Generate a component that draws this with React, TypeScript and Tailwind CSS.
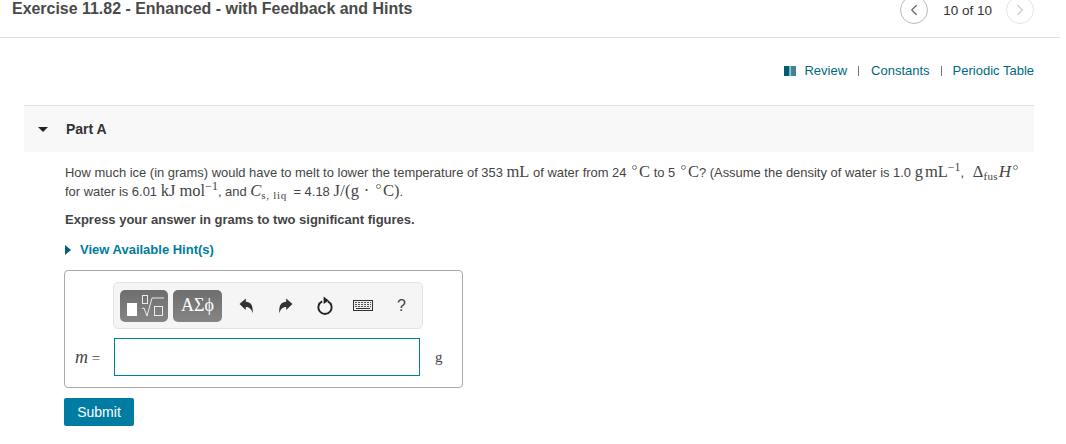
import React from 'react';
import { ChevronLeft, ChevronRight } from 'lucide-react';

// Serif run used for units and symbols inside the question text
const M: React.FC<{ children: React.ReactNode; className?: string }> = ({ children, className }) => (
  <span className={`font-['Liberation_Serif',serif] text-[16.5px] leading-none ${className || ''}`}>{children}</span>
);

const Sup: React.FC<{ children: React.ReactNode }> = ({ children }) => (
  <sup className="font-['Liberation_Serif',serif] text-[12px] leading-none align-[6px] top-0">{children}</sup>
);

const Deg = () => (
  <span className="inline-block w-[5px] h-[5px] mx-[2px] rounded-full border border-[#777] align-[7px]" />
);

const Sub: React.FC<{ children: React.ReactNode; className?: string }> = ({ children, className }) => (
  <sub className={`font-['Liberation_Serif',serif] text-[11px] leading-none align-[-3px] bottom-0 ${className || ''}`}>{children}</sub>
);

const TemplateIcon = () => (
  <svg width="48" height="32" viewBox="0 0 48 32" fill="none">
    <rect x="7" y="13" width="10" height="13" fill="#fff" />
    <path d="M22 18.500l2-0.500 3 8 5-18h12" stroke="#fff" strokeWidth="1" opacity="0.85" />
    <rect x="22.500" y="5.500" width="5" height="8" stroke="#fff" strokeWidth="1" opacity="0.85" />
    <rect x="34.500" y="16.500" width="8" height="9" stroke="#fff" strokeWidth="1" opacity="0.85" />
  </svg>
);

const UndoIcon = ({ flip }: { flip?: boolean }) => (
  <svg width="15" height="16" viewBox="0 0 15 16" className={flip ? '-scale-x-100' : ''}>
    <path d="M0.500 6L6.800 0.500V3.700C11.500 3.800 14.500 7 13.600 15.500C12.800 11.500 10.500 9 6.800 9V12Z" fill="#333" />
  </svg>
);

const ResetIcon = () => (
  <svg width="16" height="19" viewBox="0 0 16 19" fill="none">
    <path d="M5.200 5.400A6.600 6.600 0 1 0 10.800 5.400" stroke="#222" strokeWidth="1.900" />
    <path d="M6.600 0.500L11.800 4.500L6.600 8Z" fill="#222" />
  </svg>
);

const KeyboardIcon = () => (
  <svg width="20" height="11" viewBox="0 0 20 11" fill="none">
    <rect x="0.500" y="0.500" width="19" height="10" fill="#eee" stroke="#333" />
    <path d="M2 2.500h16M2 4.500h16M2 6.500h16" stroke="#555" strokeWidth="1" strokeDasharray="2 1" />
    <path d="M3 8.500h14" stroke="#333" strokeWidth="1" />
  </svg>
);

export default function App() {
  return (
    <div className="w-[1066px] h-[444px] overflow-hidden bg-white font-['Liberation_Sans',Arial,sans-serif] text-[#333]">
      {/* Header */}
      <div className="w-[1060px] h-[38px] border-b border-[#dedede] flex justify-between pl-3 pr-[26px]">
        <h1 className="text-[15.95px] leading-[17px] font-bold text-[#4a4a4a]">
          Exercise 11.82 - Enhanced - with Feedback and Hints
        </h1>
        <div className="flex items-start -mt-1">
          <div className="w-[28px] h-[28px] rounded-full border border-[#bbb] flex items-center justify-center">
            <ChevronLeft size={18} strokeWidth={1.6} className="text-[#666]" />
          </div>
          <span className="ml-[15px] mr-[14px] mt-[7px] text-[13.5px] leading-[15px] text-[#333]">10 of 10</span>
          <div className="w-[28px] h-[28px] rounded-full border border-[#e4e4e4] flex items-center justify-center">
            <ChevronRight size={18} strokeWidth={1.6} className="text-[#ccc]" />
          </div>
        </div>
      </div>

      {/* Resource links */}
      <div className="w-[1034px] h-[67px] pt-[25px] flex justify-end items-start text-[13px] leading-[15px] text-[#006a80]">
        <svg width="12" height="10" viewBox="0 0 12 10" className="mt-[3px] mr-[8px]">
          <rect x="0" y="0" width="5.500" height="10" fill="#005d75" />
          <rect x="6.500" y="0" width="5.500" height="10" fill="#3f8496" />
        </svg>
        <span>Review</span>
        <div className="ml-[11px] mr-[12px] mt-[3px] w-px h-[10px] bg-[#777]" />
        <span>Constants</span>
        <div className="ml-[11px] mr-[11px] mt-[3px] w-px h-[10px] bg-[#777]" />
        <span>Periodic Table</span>
      </div>

      {/* Part header */}
      <div className="ml-6 w-[1010px] h-[47px] border-t border-[#dedede] bg-[#f8f8f8] flex items-center">
        <div className="ml-[14px] w-0 h-0 border-x-[5.5px] border-x-transparent border-t-[5px] border-t-[#222]" />
        <span className="ml-[18px] text-[14px] font-bold text-[#333]">Part A</span>
      </div>

      {/* Question body */}
      <div className="ml-[65px] w-[975px]">
        <div className="mt-[9px] h-[38px] text-[12.95px] leading-[19px] text-[#444] whitespace-nowrap">
          <div className="h-[19px]">
            How much ice (in grams) would have to melt to lower the temperature of 353 <M>mL</M> of water from 24 <Deg />
            <M>C</M> to 5 <Deg /><M>C</M>? (Assume the density of water is 1.0 <M>g</M><M className="ml-[2px]">mL</M><Sup>−1</Sup>, <M className="ml-[5px]">Δ</M><Sub className="tracking-[0.3px]">fus</Sub>
            <M className="italic text-[17px] ml-[1px]">H</M><Deg />
          </div>
          <div className="h-[19px]">
            for water is 6.01 <M>kJ mol</M><Sup>−1</Sup>, and <M className="italic">C</M><Sub className="tracking-[0.7px] mr-[3px]">s, liq</Sub> = 4.18 <M className="tracking-[0.3px]">J/(g · </M>
            <Deg /><M>C)</M>.
          </div>
        </div>
        <p className="mt-[13px] text-[13px] leading-[15px] font-bold text-[#444]">
          Express your answer in grams to two significant figures.
        </p>
        <div className="mt-[15px] flex items-center text-[13px] leading-[15px] font-bold text-[#007c9e]">
          <div className="w-0 h-0 border-y-[5px] border-y-transparent border-l-[6px] border-l-[#005f7a]" />
          <span className="ml-[9px]">View Available Hint(s)</span>
        </div>
      </div>

      {/* Answer box */}
      <div className="ml-16 mt-[13px] w-[399px] h-[118px] border border-[#aaa] rounded-[4px] flex flex-col">
        <div className="ml-[48px] mt-[11px] w-[310px] h-[47px] border border-[#e2e2e2] rounded-[5px] bg-[#f5f5f5] flex items-center pl-[6px]">
          <div className="w-[48px] h-[32px] rounded-[5px] bg-gradient-to-b from-[#6e6e6e] to-[#858585]">
            <TemplateIcon />
          </div>
          <div className="ml-[5px] w-[49px] h-[32px] rounded-[5px] bg-gradient-to-b from-[#6e6e6e] to-[#858585] flex items-center justify-center font-['Liberation_Serif',serif] text-[18px] text-white">
            ΑΣϕ
          </div>
          <div className="ml-[17px] flex items-center">
            <UndoIcon />
            <div className="ml-[24px]"><UndoIcon flip /></div>
            <div className="ml-[24px]"><ResetIcon /></div>
            <div className="ml-[20px]"><KeyboardIcon /></div>
            <span className="ml-[24px] text-[16px] text-[#444]">?</span>
          </div>
        </div>
        <div className="mt-[9px] flex items-center">
          <span className="w-[49px] pl-[10px] font-['Liberation_Serif',serif] text-[15px] text-[#444] whitespace-nowrap">
            <i className="text-[18px]">m</i> =
          </span>
          <div className="w-[306px] h-[38px] border border-[#007c9e] bg-white" />
          <span className="ml-[15px] font-['Liberation_Serif',serif] text-[15px] text-[#444]">g</span>
        </div>
      </div>

      {/* Submit */}
      <button className="ml-16 mt-[10px] w-[70px] h-[28px] rounded-[2px] bg-[#007ca3] text-white text-[14px] font-normal flex items-center justify-center">
        Submit
      </button>
    </div>
  );
}
